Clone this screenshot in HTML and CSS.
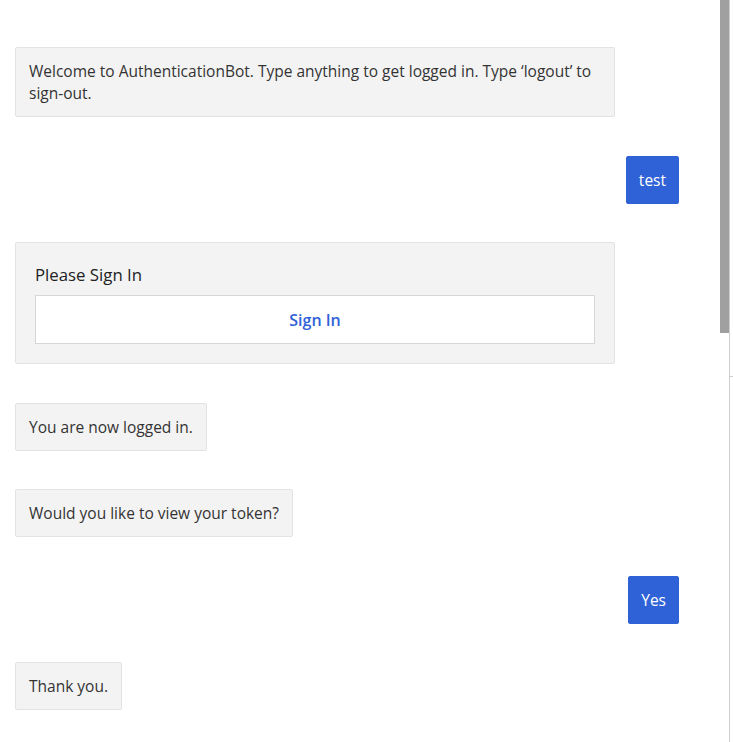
FILE: index.html
```html
<!DOCTYPE html>
<html lang="en">
<head>
    <meta charset="UTF-8">
    <meta name="viewport" content="width=device-width, initial-scale=1.0">
    <title>AuthenticationBot</title>
    <link rel="stylesheet" href="styles.css">
</head>
<body>
    <div class="app">
        <div class="chat">
            <div class="messages">
                <div class="message bot">
                    <div class="bubble">Welcome to AuthenticationBot. Type anything to get logged in. Type ‘logout’ to sign-out.</div>
                </div>
                <div class="message me">
                    <div class="bubble">test</div>
                </div>
                <div class="message bot">
                    <div class="card">
                        <div class="card-title">Please Sign In</div>
                        <button class="card-btn">Sign In</button>
                    </div>
                </div>
                <div class="message bot">
                    <div class="bubble">You are now logged in.</div>
                </div>
                <div class="message bot">
                    <div class="bubble">Would you like to view your token?</div>
                </div>
                <div class="message me">
                    <div class="bubble">Yes</div>
                </div>
                <div class="message bot">
                    <div class="bubble">Thank you.</div>
                </div>
            </div>
        </div>
        <div class="scrollbar">
            <div class="thumb"></div>
        </div>
        <div class="side">
            <div class="side-top"></div>
            <div class="side-rest"></div>
        </div>
    </div>
</body>
</html>
```

FILE: styles.css
```css
* {
    box-sizing: border-box;
    margin: 0;
    padding: 0;
}
body {
    font-family: "Open Sans", "Noto Sans", sans-serif;
    font-size: 15.5px;
    line-height: 22px;
    color: #333;
    background-color: #fff;
    height: 742px;
    overflow: hidden;
}
.app {
    display: flex;
    height: 742px;
}
.chat {
    width: 720px;
    flex-shrink: 0;
}
.messages {
    display: flex;
    flex-direction: column;
    gap: 38.5px;
    padding: 47px 41px 0 15px;
}
.message {
    display: flex;
}
.message.me {
    justify-content: flex-end;
}
.bubble {
    max-width: 600px;
    padding: 12px 13px;
    background-color: #f3f3f3;
    border: 1px solid #e3e3e3;
    border-radius: 2px;
}
.message.me .bubble {
    padding: 12px 12px;
    background-color: #2f62d6;
    border-color: #2f62d6;
    color: #fff;
}
.card {
    width: 600px;
    padding: 20px 19px 19px;
    background-color: #f3f3f3;
    border: 1px solid #e3e3e3;
    border-radius: 2px;
}
.card-title {
    font-size: 16.8px;
    line-height: 24px;
    color: #222;
    margin-bottom: 8px;
}
.card-btn {
    display: block;
    width: 100%;
    height: 49px;
    background-color: #fff;
    border: 1px solid #d6d6d6;
    font-family: inherit;
    font-size: 16px;
    font-weight: 600;
    color: #2f62d6;
    cursor: pointer;
}
.scrollbar {
    width: 9px;
    flex-shrink: 0;
}
.thumb {
    height: 333px;
    background-color: #a0a0a0;
}
.side {
    flex: 1;
    border-left: 1px solid #cfcfcf;
}
.side-top {
    height: 376px;
}
.side-rest {
    border-top: 1px solid #cfcfcf;
}
```
